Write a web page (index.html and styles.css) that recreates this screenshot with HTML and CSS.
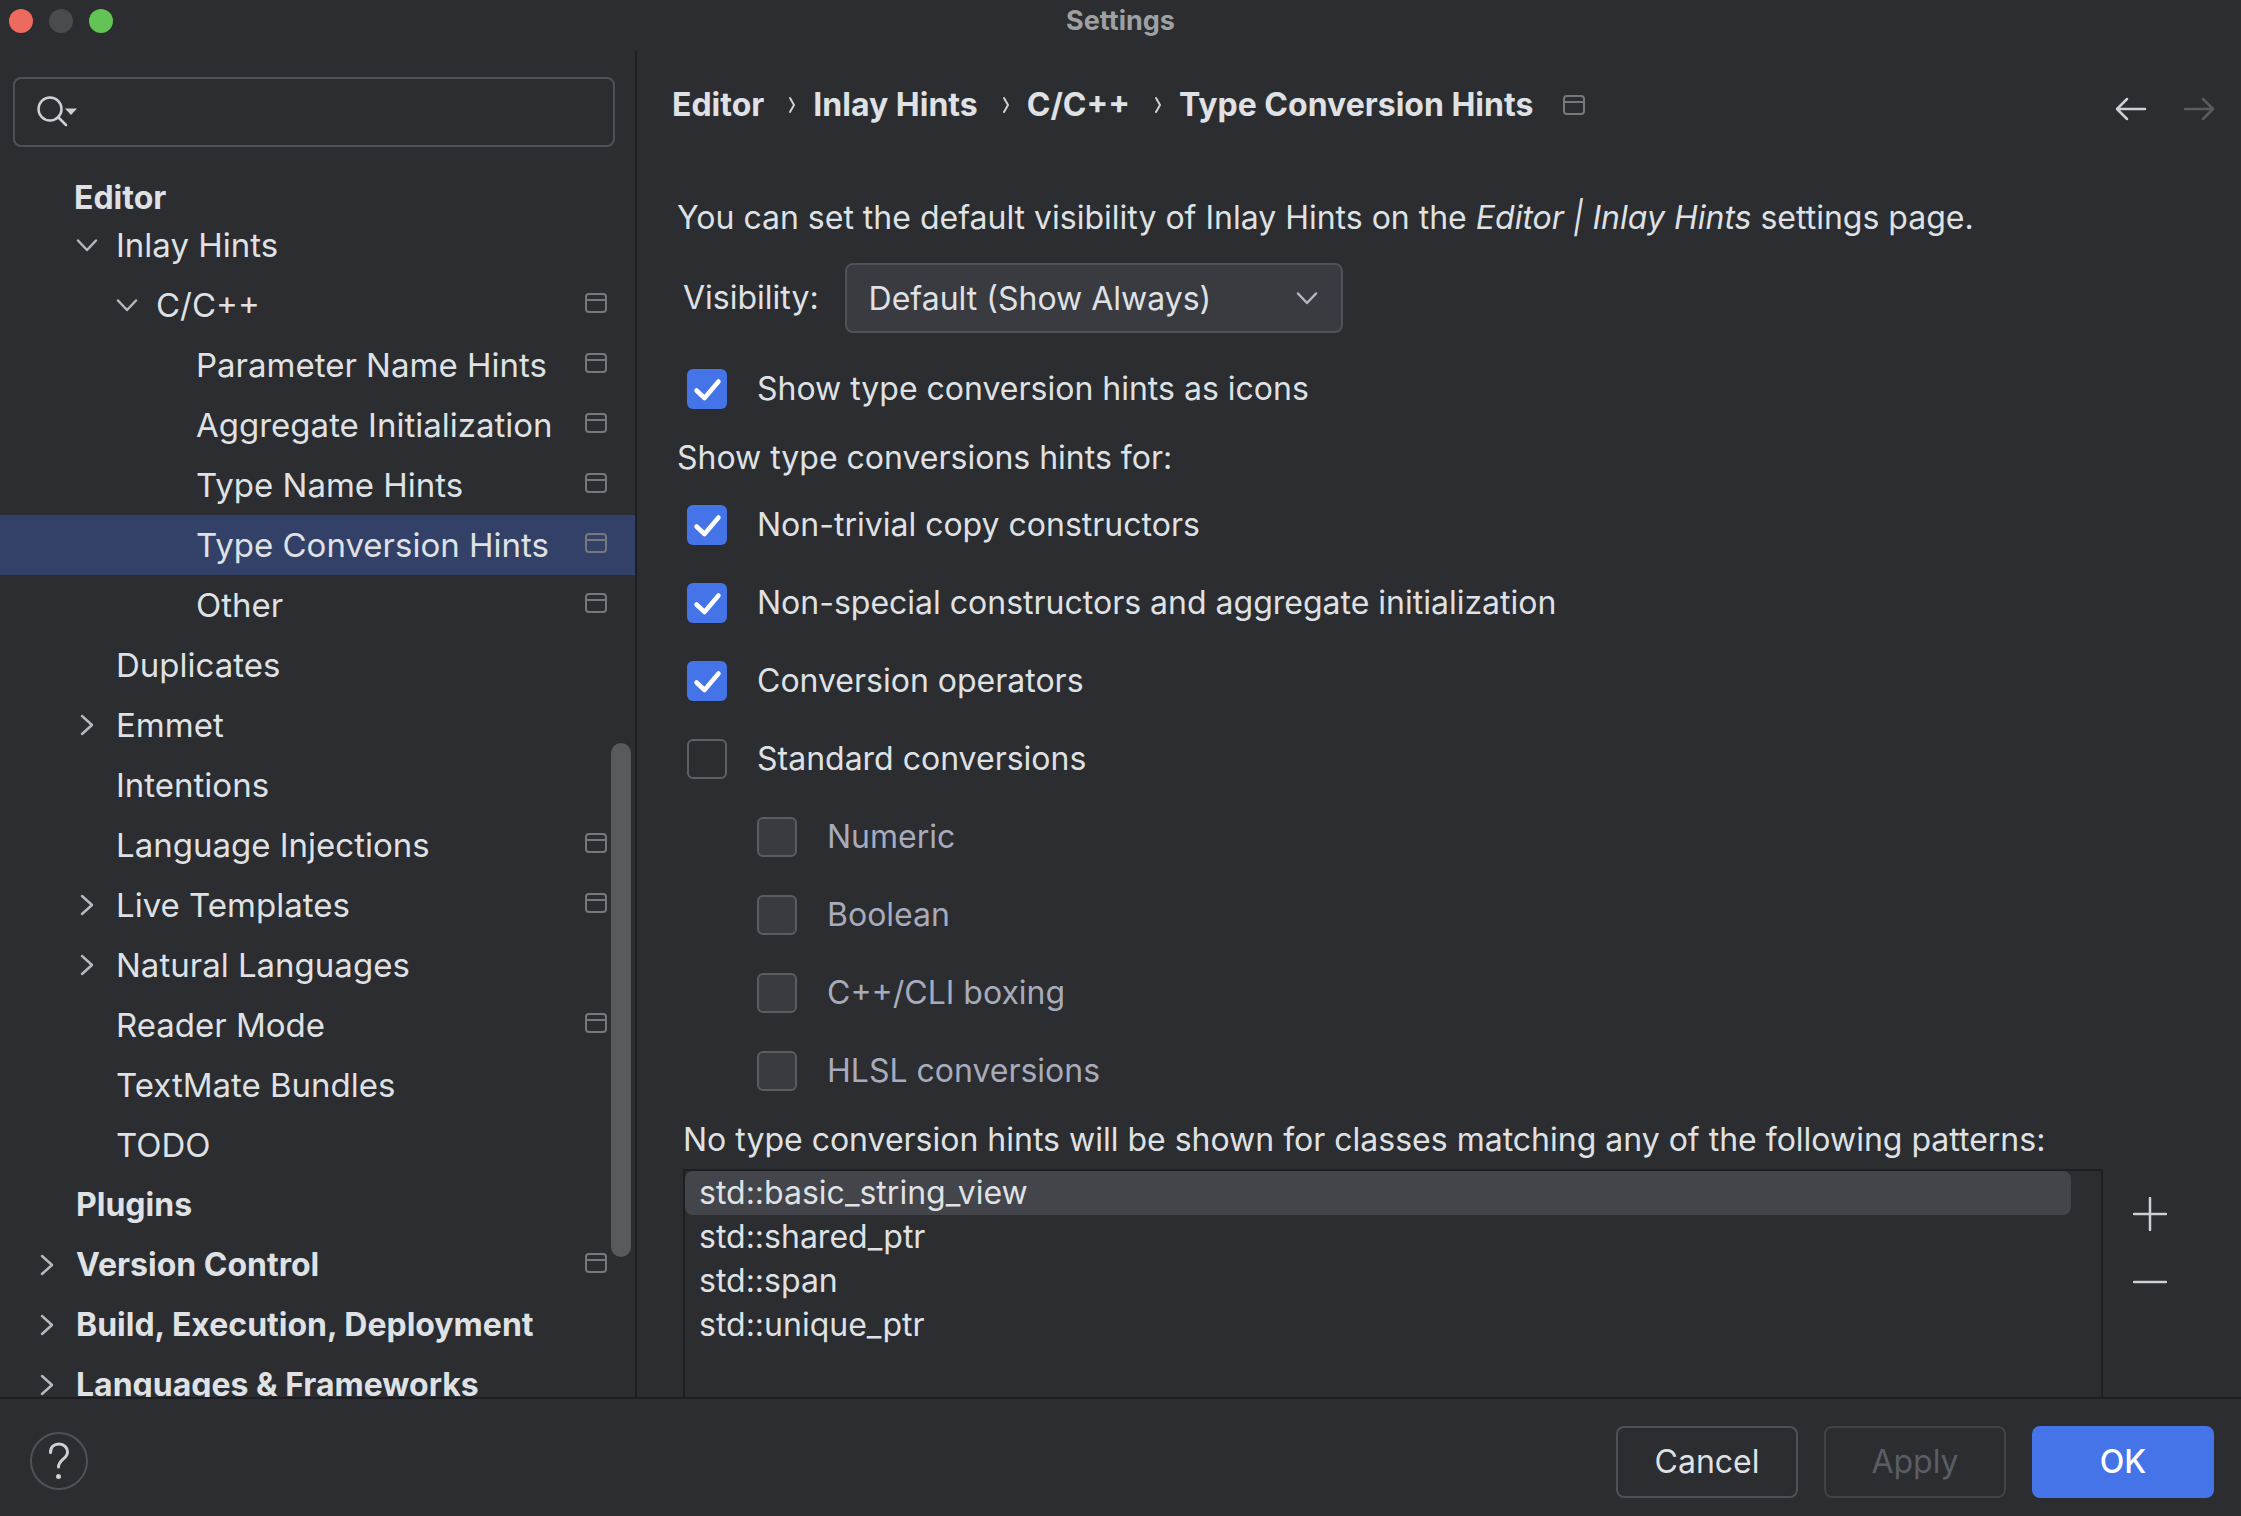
FILE: index.html
```html
<!DOCTYPE html>
<html lang="en">
<head>
  <meta charset="UTF-8">
  <title>Settings</title>
  <link rel="stylesheet" href="styles.css">
</head>
<body>
  <!-- shared icons -->
  <svg class="sprite" aria-hidden="true">
    <symbol id="icon-down" viewBox="0 0 32 32"><path d="M7 11.5 L16 21 L25 11.5"/></symbol>
    <symbol id="icon-right" viewBox="0 0 32 32"><path d="M11 7 L21 16 L11 25"/></symbol>
    <symbol id="icon-project" viewBox="0 0 22 20"><rect x="1" y="1" width="20" height="18" rx="3"/><path d="M1 7 H21"/></symbol>
    <symbol id="icon-crumb" viewBox="0 0 8 18"><path d="M2 2 L6 9 L2 16"/></symbol>
  </svg>

  <header class="titlebar">
    <div class="lights">
      <button class="light close" aria-label="Close"></button>
      <button class="light minimize" aria-label="Minimize" disabled></button>
      <button class="light zoom" aria-label="Zoom"></button>
    </div>
    <h1>Settings</h1>
  </header>

  <div class="content">
    <aside class="sidebar">
      <label class="search">
        <svg width="44" height="36" viewBox="0 0 44 36"><circle cx="15" cy="15" r="11.5"/><path d="M23 23 L31 31"/><path class="fill" d="M30 14.500 H42 L36 21 Z"/></svg>
        <input type="text" aria-label="Search settings">
      </label>
      <div class="tree-title">Editor</div>
      <ul class="tree">
        <li class="row level-1"><button class="toggle" aria-label="Collapse"><svg><use href="#icon-down"/></svg></button><a href="#">Inlay Hints</a></li>
        <li class="row level-2"><button class="toggle" aria-label="Collapse"><svg><use href="#icon-down"/></svg></button><a href="#">C/C++</a><svg class="project"><use href="#icon-project"/></svg></li>
        <li class="row level-3"><a href="#">Parameter Name Hints</a><svg class="project"><use href="#icon-project"/></svg></li>
        <li class="row level-3"><a href="#">Aggregate Initialization</a><svg class="project"><use href="#icon-project"/></svg></li>
        <li class="row level-3"><a href="#">Type Name Hints</a><svg class="project"><use href="#icon-project"/></svg></li>
        <li class="row level-3 selected"><a href="#">Type Conversion Hints</a><svg class="project"><use href="#icon-project"/></svg></li>
        <li class="row level-3"><a href="#">Other</a><svg class="project"><use href="#icon-project"/></svg></li>
        <li class="row level-1"><a href="#">Duplicates</a></li>
        <li class="row level-1"><button class="toggle" aria-label="Expand"><svg><use href="#icon-right"/></svg></button><a href="#">Emmet</a></li>
        <li class="row level-1"><a href="#">Intentions</a></li>
        <li class="row level-1"><a href="#">Language Injections</a><svg class="project"><use href="#icon-project"/></svg></li>
        <li class="row level-1"><button class="toggle" aria-label="Expand"><svg><use href="#icon-right"/></svg></button><a href="#">Live Templates</a><svg class="project"><use href="#icon-project"/></svg></li>
        <li class="row level-1"><button class="toggle" aria-label="Expand"><svg><use href="#icon-right"/></svg></button><a href="#">Natural Languages</a></li>
        <li class="row level-1"><a href="#">Reader Mode</a><svg class="project"><use href="#icon-project"/></svg></li>
        <li class="row level-1"><a href="#">TextMate Bundles</a></li>
        <li class="row level-1"><a href="#">TODO</a></li>
        <li class="row level-0"><a href="#">Plugins</a></li>
        <li class="row level-0"><button class="toggle" aria-label="Expand"><svg><use href="#icon-right"/></svg></button><a href="#">Version Control</a><svg class="project"><use href="#icon-project"/></svg></li>
        <li class="row level-0"><button class="toggle" aria-label="Expand"><svg><use href="#icon-right"/></svg></button><a href="#">Build, Execution, Deployment</a></li>
        <li class="row level-0"><button class="toggle" aria-label="Expand"><svg><use href="#icon-right"/></svg></button><a href="#">Languages &amp; Frameworks</a></li>
      </ul>
      <div class="scroll-thumb"></div>
    </aside>

    <main class="main">
      <div class="main-header">
        <nav class="breadcrumbs">
          <a href="#">Editor</a>
          <svg class="crumb"><use href="#icon-crumb"/></svg>
          <a href="#">Inlay Hints</a>
          <svg class="crumb"><use href="#icon-crumb"/></svg>
          <a href="#">C/C++</a>
          <svg class="crumb"><use href="#icon-crumb"/></svg>
          <a href="#">Type Conversion Hints</a>
          <svg class="project"><use href="#icon-project"/></svg>
        </nav>
        <div class="history">
          <button aria-label="Back"><svg width="32" height="24" viewBox="0 0 32 24"><path d="M30 12 H2 M12 2 L2 12 L12 22"/></svg></button>
          <button aria-label="Forward" disabled><svg width="32" height="24" viewBox="0 0 32 24"><path d="M2 12 H30 M20 2 L30 12 L20 22"/></svg></button>
        </div>
      </div>

      <form class="settings">
        <p class="text">You can set the default visibility of Inlay Hints on the <em>Editor | Inlay Hints</em> settings page.</p>

        <div class="visibility">
          <label for="visibility">Visibility:</label>
          <div class="select">
            <select id="visibility">
              <option>Default (Show Always)</option>
              <option>Show Always</option>
              <option>Never</option>
            </select>
            <svg><use href="#icon-down"/></svg>
          </div>
        </div>

        <label class="check"><input type="checkbox" checked> Show type conversion hints as icons</label>

        <p class="text group-title">Show type conversions hints for:</p>
        <div class="checks">
          <label class="check"><input type="checkbox" checked> Non-trivial copy constructors</label>
          <label class="check"><input type="checkbox" checked> Non-special constructors and aggregate initialization</label>
          <label class="check"><input type="checkbox" checked> Conversion operators</label>
          <label class="check"><input type="checkbox"> Standard conversions</label>
          <label class="check nested"><input type="checkbox" disabled> Numeric</label>
          <label class="check nested"><input type="checkbox" disabled> Boolean</label>
          <label class="check nested"><input type="checkbox" disabled> C++/CLI boxing</label>
          <label class="check nested"><input type="checkbox" disabled> HLSL conversions</label>
        </div>

        <p class="text patterns-title">No type conversion hints will be shown for classes matching any of the following patterns:</p>
        <div class="patterns">
          <ul class="pattern-list">
            <li class="active">std::basic_string_view</li>
            <li>std::shared_ptr</li>
            <li>std::span</li>
            <li>std::unique_ptr</li>
          </ul>
          <div class="pattern-tools">
            <button type="button" aria-label="Add"><svg width="34" height="34" viewBox="0 0 34 34"><path d="M1 17 H33 M17 1 V33"/></svg></button>
            <button type="button" aria-label="Remove"><svg width="34" height="34" viewBox="0 0 34 34"><path d="M1 17 H33"/></svg></button>
          </div>
        </div>
      </form>
    </main>
  </div>

  <footer class="footer">
    <button class="help" aria-label="Help"><svg width="60" height="60" viewBox="0 0 60 60"><circle class="ring" cx="30" cy="30" r="28"/><path d="M21.500 21.500 C21.500 16 25 13 30 13 C35 13 38.500 16.500 38.500 21 C38.500 28 29.500 28.500 29.500 36"/><circle class="dot" cx="29.500" cy="45.500" r="2.500"/></svg></button>
    <div class="actions">
      <button class="btn">Cancel</button>
      <button class="btn" disabled>Apply</button>
      <button class="btn primary">OK</button>
    </div>
  </footer>
</body>
</html>
```
FILE: styles.css
```css
* {
  margin: 0;
  padding: 0;
  box-sizing: border-box;
}

body {
  display: flex;
  flex-direction: column;
  height: 100vh;
  overflow: hidden;
  background-color: #2b2d30;
  color: #dfe1e5;
  font-family: Inter, sans-serif;
  font-size: 32px;
  line-height: 44px;
}

a {
  color: inherit;
  text-decoration: none;
}

button, input, select {
  font: inherit;
  color: inherit;
  background: none;
  border: none;
  outline: none;
}

ul {
  list-style: none;
}

svg {
  display: block;
  flex: none;
  fill: none;
  stroke: #ced0d6;
  stroke-width: 2.5;
  stroke-linecap: round;
  stroke-linejoin: round;
}

.sprite {
  position: absolute;
  width: 0;
  height: 0;
}

.project {
  width: 22px;
  height: 20px;
  stroke: #77787d;
  stroke-width: 2;
}

/* Title bar */
.titlebar {
  display: grid;
  grid-template-columns: 1fr auto 1fr;
  align-items: center;
  height: 42px;
  margin-bottom: 9px;
}

.titlebar h1 {
  font-size: 27px;
  font-weight: 700;
  line-height: 40px;
  color: #9fa0a2;
}

.lights {
  display: flex;
  gap: 16px;
  padding-left: 9px;
}

.light {
  width: 24px;
  height: 24px;
  border-radius: 50%;
}

.close {
  background-color: #ed6a5f;
}

.minimize {
  background-color: #4a4b4c;
}

.zoom {
  background-color: #61c454;
}

.content {
  display: flex;
  flex: 1;
  min-height: 0;
}

/* Sidebar */
.sidebar {
  position: relative;
  flex: none;
  width: 637px;
  padding-top: 26px;
  border-right: 2px solid #1e1f22;
  font-size: 33px;
  overflow: hidden;
}

.search {
  display: flex;
  align-items: center;
  height: 70px;
  margin: 0 20px 0 13px;
  padding-left: 20px;
  border: 2px solid #4e5157;
  border-radius: 8px;
}

.search input {
  flex: 1;
  min-width: 0;
}

.search .fill {
  fill: #ced0d6;
  stroke: none;
}

.tree-title {
  margin-top: 32px;
  padding-left: 74px;
  font-size: 32px;
  font-weight: 700;
  line-height: 38px;
  margin-bottom: -2px;
}

.row {
  display: flex;
  align-items: center;
  height: 60px;
  padding-left: 76px;
  padding-right: 28px;
}

.row a {
  flex: 1;
  white-space: nowrap;
}

.row .project {
  margin-bottom: 4px;
}

.level-0 {
  font-size: 32px;
  font-weight: 700;
}

.level-1 {
  padding-left: 116px;
}

.level-2 {
  padding-left: 156px;
}

.level-3 {
  padding-left: 196px;
}

.selected {
  background-color: #334168;
}

.toggle {
  width: 32px;
  height: 32px;
  margin-left: -45px;
  margin-right: 13px;
}

.toggle svg {
  width: 32px;
  height: 32px;
  stroke: #b4b8bf;
}

.scroll-thumb {
  position: absolute;
  top: 692px;
  right: 4px;
  width: 20px;
  height: 514px;
  border-radius: 10px;
  background-color: #595a5c;
}

/* Main panel */
.main {
  flex: 1;
  min-width: 0;
  overflow: hidden;
}

.main-header {
  display: flex;
  justify-content: space-between;
  align-items: center;
  height: 108px;
  padding: 0 26px 0 35px;
}

.breadcrumbs {
  display: flex;
  align-items: center;
  font-weight: 700;
}

.crumb {
  width: 8px;
  height: 18px;
  margin: 0 17px 0 24px;
  stroke-width: 2;
}

.breadcrumbs .project {
  margin-left: 30px;
}

.history {
  display: flex;
  gap: 36px;
  padding-top: 8px;
}

.history button:disabled svg {
  stroke: #5a5b5d;
}

.settings {
  padding: 37px 0 0 40px;
}

.visibility {
  display: flex;
  align-items: center;
  gap: 26px;
  margin: 23px 0 36px 6px;
}

.select {
  position: relative;
  flex: none;
  width: 498px;
}

.select select {
  display: block;
  width: 100%;
  height: 70px;
  padding: 2px 60px 0 22px;
  appearance: none;
  background-color: #393b40;
  border: 2px solid #4e5157;
  border-radius: 8px;
}

.select svg {
  position: absolute;
  top: 19px;
  right: 20px;
  width: 32px;
  height: 32px;
  stroke: #b4b8bf;
  pointer-events: none;
}

.check {
  display: flex;
  align-items: center;
  gap: 30px;
  height: 40px;
  padding-left: 10px;
}

.check input {
  flex: none;
  width: 40px;
  height: 40px;
  appearance: none;
  border: 2px solid #5e6066;
  border-radius: 6px;
}

.check input:checked {
  border: none;
  background: #4474e8 url("data:image/svg+xml,%3Csvg xmlns='http://www.w3.org/2000/svg' viewBox='0 0 40 40'%3E%3Cpath d='M9.500 21.500 L17.500 29 L31.500 12.500' fill='none' stroke='white' stroke-width='4.500' stroke-linecap='round' stroke-linejoin='round'/%3E%3C/svg%3E");
}

.check input:disabled {
  background-color: #393b40;
  border-color: #5a5c60;
}

.nested {
  padding-left: 80px;
  color: #a8abbc;
}

.group-title {
  margin: 27px 0 25px;
}

.checks {
  display: flex;
  flex-direction: column;
  gap: 38px;
}

.patterns-title {
  margin: 27px 0 7px 6px;
}

.patterns {
  display: flex;
  margin-left: 6px;
}

.pattern-list {
  flex: 1;
  height: 400px;
  border: 2px solid #1e1f22;
}

.pattern-list li {
  margin-right: 30px;
  padding-left: 14px;
}

.pattern-list .active {
  background-color: #43454a;
  border-radius: 8px;
}

.pattern-tools {
  display: flex;
  flex-direction: column;
  gap: 34px;
  padding: 28px 74px 0 30px;
}

/* Footer */
.footer {
  display: flex;
  flex: none;
  justify-content: space-between;
  align-items: flex-start;
  height: 119px;
  padding: 27px 27px 0 29px;
  border-top: 2px solid #1e1f22;
}

.help {
  margin-top: 5px;
}

.help .ring {
  stroke: #4e5157;
  stroke-width: 2;
}

.help path {
  stroke-width: 3;
}

.help .dot {
  fill: #ced0d6;
  stroke: none;
}

.actions {
  display: flex;
  gap: 26px;
}

.btn {
  width: 182px;
  height: 72px;
  border: 2px solid #4e5157;
  border-radius: 8px;
}

.btn:disabled {
  color: #5a5d63;
  border-color: #414347;
}

.primary {
  color: #fff;
  font-weight: 500;
  background-color: #4474e8;
  border-color: #4474e8;
}
```
